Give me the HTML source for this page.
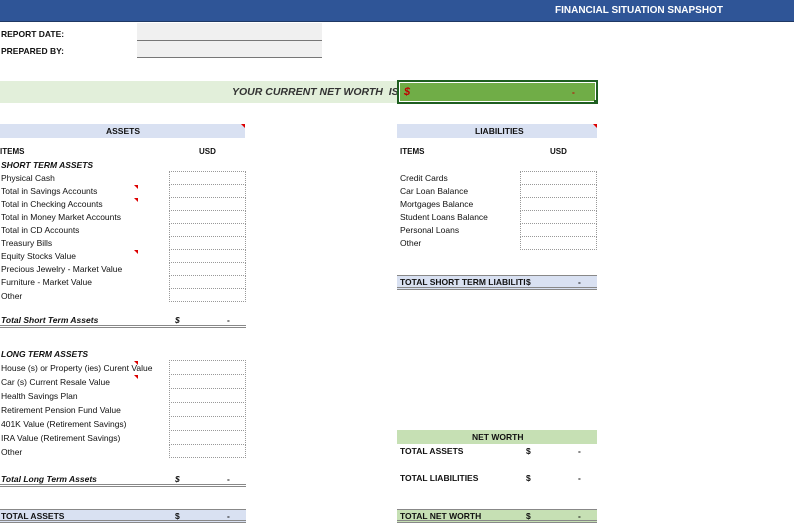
<!DOCTYPE html>
<html><head><meta charset="utf-8"><style>
*{margin:0;padding:0;box-sizing:border-box}
body{width:794px;height:530px;position:relative;background:#fff;font-family:"Liberation Sans",sans-serif;font-size:8.5px;color:#111;overflow:hidden}
.a{position:absolute;white-space:nowrap;line-height:12px}
.b{font-weight:bold}
.i{font-style:italic}
.box{position:absolute;border:1px dotted #999;background:#fff}
.tri{position:absolute;width:0;height:0;border-top:4px solid #d00;border-left:4px solid transparent}
.dl{position:absolute;height:3px;border-top:1px solid #888;border-bottom:1px solid #888}
</style></head><body>
<div style="position:absolute;left:0;top:0;width:794px;height:22px;background:#2f5597;border-bottom:1px solid #1f3864"></div>
<div class="a b" style="left:555px;top:5px;color:#fff;font-size:10px">FINANCIAL SITUATION SNAPSHOT</div>

<div class="a b" style="left:1px;top:28px">REPORT DATE:</div>
<div class="a b" style="left:1px;top:45px">PREPARED BY:</div>
<div style="position:absolute;left:137px;top:23px;width:185px;height:18px;background:#f0f0f0;border-bottom:1px solid #777"></div>
<div style="position:absolute;left:137px;top:41px;width:185px;height:17px;background:#f0f0f0;border-bottom:1px solid #777"></div>

<div style="position:absolute;left:0;top:81px;width:397px;height:22px;background:#e2efda"></div>
<div class="a b i" style="left:232px;top:86px;font-size:10.5px;color:#333">YOUR CURRENT NET WORTH &nbsp;IS :</div>
<div style="position:absolute;left:397px;top:80px;width:201px;height:24px;background:#70ad47;border:2px solid #1e5e20;outline:1px solid #fff;outline-offset:-3px"></div>
<div class="a b i" style="left:404px;top:86px;font-size:11px;color:#c00000">$</div>
<div class="a b" style="left:572px;top:86px;color:#c00000">-</div>
<div style="position:absolute;left:594px;top:100px;width:4px;height:4px;background:#1e5e20"></div>

<!-- ASSETS -->
<div style="position:absolute;left:0;top:124px;width:245px;height:14px;background:#d9e1f2"></div>
<div class="a b" style="left:106px;top:125px">ASSETS</div>
<div class="tri" style="left:241px;top:124px"></div>
<div class="a b" style="left:0;top:146px;font-size:8px">ITEMS</div>
<div class="a b" style="left:199px;top:146px;font-size:8px">USD</div>
<div class="a b i" style="left:1px;top:159px">SHORT TERM ASSETS</div>
<div class="a" style="left:1px;top:172px">Physical Cash</div>
<div class="a" style="left:1px;top:185px">Total in Savings Accounts</div>
<div class="a" style="left:1px;top:198px">Total in Checking Accounts</div>
<div class="a" style="left:1px;top:211px">Total in Money Market Accounts</div>
<div class="a" style="left:1px;top:224px">Total in CD Accounts</div>
<div class="a" style="left:1px;top:237px">Treasury Bills</div>
<div class="a" style="left:1px;top:250px">Equity Stocks Value</div>
<div class="a" style="left:1px;top:263px">Precious Jewelry - Market Value</div>
<div class="a" style="left:1px;top:276px">Furniture - Market Value</div>
<div class="a" style="left:1px;top:290px">Other</div>
<div class="tri" style="left:134px;top:185px"></div>
<div class="tri" style="left:134px;top:198px"></div>
<div class="tri" style="left:134px;top:250px"></div>
<div class="box" style="left:169px;top:171px;width:77px;height:14px"></div>
<div class="box" style="left:169px;top:184px;width:77px;height:14px"></div>
<div class="box" style="left:169px;top:197px;width:77px;height:14px"></div>
<div class="box" style="left:169px;top:210px;width:77px;height:14px"></div>
<div class="box" style="left:169px;top:223px;width:77px;height:14px"></div>
<div class="box" style="left:169px;top:236px;width:77px;height:14px"></div>
<div class="box" style="left:169px;top:249px;width:77px;height:14px"></div>
<div class="box" style="left:169px;top:262px;width:77px;height:14px"></div>
<div class="box" style="left:169px;top:275px;width:77px;height:14px"></div>
<div class="box" style="left:169px;top:288px;width:77px;height:14px"></div>
<div class="a b i" style="left:1px;top:314px">Total Short Term Assets</div>
<div class="a b i" style="left:175px;top:314px">$</div>
<div class="a b" style="left:227px;top:314px">-</div>
<div class="dl" style="left:0;top:325px;width:246px"></div>

<div class="a b i" style="left:1px;top:348px">LONG TERM ASSETS</div>
<div class="a" style="left:1px;top:362px">House (s) or Property (ies) Curent Value</div>
<div class="a" style="left:1px;top:376px">Car (s) Current Resale Value</div>
<div class="a" style="left:1px;top:390px">Health Savings Plan</div>
<div class="a" style="left:1px;top:404px">Retirement Pension Fund Value</div>
<div class="a" style="left:1px;top:418px">401K Value (Retirement Savings)</div>
<div class="a" style="left:1px;top:432px">IRA Value (Retirement Savings)</div>
<div class="a" style="left:1px;top:446px">Other</div>
<div class="tri" style="left:134px;top:361px"></div>
<div class="tri" style="left:134px;top:375px"></div>
<div class="box" style="left:169px;top:360px;width:77px;height:15px"></div>
<div class="box" style="left:169px;top:374px;width:77px;height:15px"></div>
<div class="box" style="left:169px;top:388px;width:77px;height:15px"></div>
<div class="box" style="left:169px;top:402px;width:77px;height:15px"></div>
<div class="box" style="left:169px;top:416px;width:77px;height:15px"></div>
<div class="box" style="left:169px;top:430px;width:77px;height:15px"></div>
<div class="box" style="left:169px;top:444px;width:77px;height:14px"></div>
<div class="a b i" style="left:1px;top:473px">Total Long Term Assets</div>
<div class="a b i" style="left:175px;top:473px">$</div>
<div class="a b" style="left:227px;top:473px">-</div>
<div class="dl" style="left:0;top:484px;width:246px"></div>

<div style="position:absolute;left:0;top:509px;width:246px;height:14px;background:#d9e1f2;border-top:1px solid #888;border-bottom:3px double #888"></div>
<div class="a b" style="left:1px;top:510px">TOTAL ASSETS</div>
<div class="a b" style="left:175px;top:510px">$</div>
<div class="a b" style="left:227px;top:510px">-</div>

<!-- LIABILITIES -->
<div style="position:absolute;left:397px;top:124px;width:200px;height:14px;background:#d9e1f2"></div>
<div class="a b" style="left:475px;top:125px">LIABILITIES</div>
<div class="tri" style="left:593px;top:124px"></div>
<div class="a b" style="left:400px;top:146px;font-size:8px">ITEMS</div>
<div class="a b" style="left:550px;top:146px;font-size:8px">USD</div>
<div class="a" style="left:400px;top:172px">Credit Cards</div>
<div class="a" style="left:400px;top:185px">Car Loan Balance</div>
<div class="a" style="left:400px;top:198px">Mortgages Balance</div>
<div class="a" style="left:400px;top:211px">Student Loans Balance</div>
<div class="a" style="left:400px;top:224px">Personal Loans</div>
<div class="a" style="left:400px;top:237px">Other</div>
<div class="box" style="left:520px;top:171px;width:77px;height:14px"></div>
<div class="box" style="left:520px;top:184px;width:77px;height:14px"></div>
<div class="box" style="left:520px;top:197px;width:77px;height:14px"></div>
<div class="box" style="left:520px;top:210px;width:77px;height:14px"></div>
<div class="box" style="left:520px;top:223px;width:77px;height:14px"></div>
<div class="box" style="left:520px;top:236px;width:77px;height:14px"></div>
<div style="position:absolute;left:397px;top:275px;width:200px;height:15px;background:#d9e1f2;border-top:1px solid #888;border-bottom:3px double #888"></div>
<div class="a b" style="left:400px;top:276px">TOTAL SHORT TERM LIABILITI</div>
<div class="a b" style="left:526px;top:276px">$</div>
<div class="a b" style="left:578px;top:276px">-</div>

<!-- NET WORTH -->
<div style="position:absolute;left:397px;top:430px;width:200px;height:14px;background:#c6e0b4"></div>
<div class="a b" style="left:472px;top:431px">NET WORTH</div>
<div class="a b" style="left:400px;top:445px">TOTAL ASSETS</div>
<div class="a b" style="left:526px;top:445px">$</div>
<div class="a b" style="left:578px;top:445px">-</div>
<div class="a b" style="left:400px;top:472px">TOTAL LIABILITIES</div>
<div class="a b" style="left:526px;top:472px">$</div>
<div class="a b" style="left:578px;top:472px">-</div>
<div style="position:absolute;left:397px;top:509px;width:200px;height:14px;background:#c6e0b4;border-top:1px solid #888;border-bottom:3px double #888"></div>
<div class="a b" style="left:400px;top:510px">TOTAL NET WORTH</div>
<div class="a b" style="left:526px;top:510px">$</div>
<div class="a b" style="left:578px;top:510px">-</div>
</body></html>
